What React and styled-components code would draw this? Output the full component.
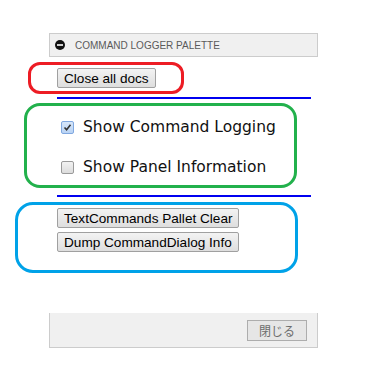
import React from 'react';
import styled, { createGlobalStyle } from 'styled-components';

const Global = createGlobalStyle`
  html, body { margin: 0; padding: 0; background: #fff; }
  body { font-family: "Liberation Sans", Arial, sans-serif; }
`;

const Page = styled.div`
  width: 372px;
  height: 390px;
  padding: 33px 0 0 49px;
  box-sizing: border-box;
`;

const Palette = styled.div`
  position: relative;
  width: 269px;
`;

const Header = styled.div`
  height: 24px;
  box-sizing: border-box;
  background: #f0f0f0;
  border: 1px solid #cccccc;
  display: flex;
  align-items: center;
  padding-left: 5px;
  gap: 10px;
`;

const Title = styled.span`
  font: 10px "Liberation Sans", Arial, sans-serif;
  color: #5a5a5a;
  text-transform: uppercase;
`;

const Body = styled.div`
  padding: 11px 7px 0 8px;
  height: 256px;
  box-sizing: border-box;
  display: flex;
  flex-direction: column;
  align-items: flex-start;
`;

const Button = styled.button`
  font: 13.6px "Liberation Sans", Arial, sans-serif;
  color: #000;
  height: 20px;
  padding: 0 6px;
  background: linear-gradient(#f3f3f3, #dedede);
  border: 1px solid #a0a0a0;
  border-radius: 2px;
  margin-top: ${p => p.$gap || 0}px;
  white-space: nowrap;
`;

const Rule = styled.div`
  align-self: stretch;
  height: 2px;
  background: #0000f0;
  margin-top: ${p => p.$gap}px;
`;

const CheckRow = styled.label`
  display: flex;
  align-items: center;
  gap: 9px;
  height: 18px;
  line-height: 18px;
  margin: ${p => p.$gap}px 0 0 4px;
  font: 15.5px/18px "DejaVu Sans", Verdana, sans-serif;
  color: #111;
`;

const Box = styled.span`
  width: 13px;
  height: 13px;
  box-sizing: border-box;
  border-radius: 2px;
  border: 1px solid ${p => (p.$on ? '#80a8e0' : '#9a9a9a')};
  background: ${p => (p.$on ? 'linear-gradient(#d6e6fa, #b9d3f4)' : 'linear-gradient(#f2f2f2, #dcdcdc)')};
  display: flex;
  align-items: center;
  justify-content: center;
`;

const Footer = styled.div`
  height: 35px;
  box-sizing: border-box;
  background: #f0f0f0;
  border: 1px solid #cccccc;
  border-top: none;
  display: flex;
  justify-content: flex-end;
  align-items: center;
  padding-right: 10px;
`;

const CloseButton = styled.button`
  width: 60px;
  height: 21px;
  box-sizing: border-box;
  background: #e6e6e6;
  border: 1px solid #adadad;
  font: 12px "Noto Sans CJK JP", sans-serif;
  color: #6d6d6d;
  padding: 0;
`;

const Mark = styled.div`
  position: absolute;
  left: ${p => p.$x}px;
  top: ${p => p.$y}px;
  width: ${p => p.$w}px;
  height: ${p => p.$h}px;
  box-sizing: border-box;
  border: ${p => p.$t}px solid ${p => p.$c};
  border-radius: ${p => p.$r}px;
  pointer-events: none;
`;

const CollapseIcon = () => (
  <svg width="10" height="10" viewBox="0 0 10 10">
    <circle cx="5" cy="5" r="5" fill="#111" />
    <rect x="2" y="4.2" width="6" height="1.6" fill="#fff" />
  </svg>
);

const Tick = () => (
  <svg width="9" height="9" viewBox="0 0 9 9">
    <path d="M1.5 4.5 L3.6 6.8 L7.5 1.8" stroke="#333" strokeWidth="1.6" fill="none" />
  </svg>
);

export default function App() {
  return (
    <Page>
      <Global />
      <Palette>
        <Header>
          <CollapseIcon />
          <Title>Command Logger Palette</Title>
        </Header>
        <Body>
          <Button>Close all docs</Button>
          <Rule $gap={9} />
          <CheckRow $gap={19}>
            <Box $on><Tick /></Box>
            Show Command Logging
          </CheckRow>
          <CheckRow $gap={22}>
            <Box />
            Show Panel Information
          </CheckRow>
          <Rule $gap={19} />
          <Button $gap={11}>TextCommands Pallet Clear</Button>
          <Button $gap={4}>Dump CommandDialog Info</Button>
        </Body>
        <Footer>
          <CloseButton>閉じる</CloseButton>
        </Footer>
        <Mark $x={-21} $y={29} $w={156} $h={32} $t={3} $c="#ed1c24" $r={12} />
        <Mark $x={-25} $y={70} $w={273} $h={85} $t={3.5} $c="#22b14c" $r={16} />
        <Mark $x={-34} $y={169} $w={283} $h={71} $t={3.5} $c="#00a2e8" $r={18} />
      </Palette>
    </Page>
  );
}
